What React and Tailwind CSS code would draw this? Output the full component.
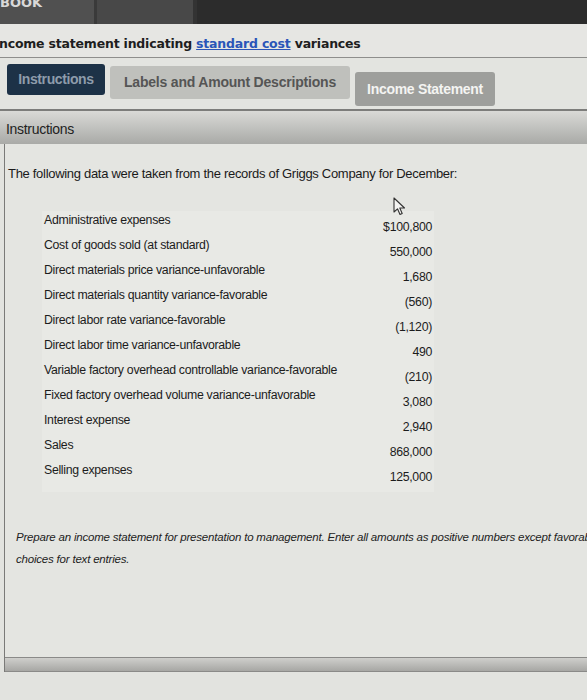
import React from 'react';

const rows = [
   ['Administrative expenses', '$100,800'],
   ['Cost of goods sold (at standard)', '550,000'],
   ['Direct materials price variance-unfavorable', '1,680'],
   ['Direct materials quantity variance-favorable', '(560)'],
   ['Direct labor rate variance-favorable', '(1,120)'],
   ['Direct labor time variance-unfavorable', '490'],
   ['Variable factory overhead controllable variance-favorable', '(210)'],
   ['Fixed factory overhead volume variance-unfavorable', '3,080'],
   ['Interest expense', '2,940'],
   ['Sales', '868,000'],
   ['Selling expenses', '125,000'],
];

function Cursor() {
   return (
      <svg width="14" height="20" viewBox="0 0 14 20" className="absolute left-[393px] top-[197px]">
         <path
            d="M1 1 L1 15 L4.5 11.8 L7 17.5 L9.2 16.5 L6.8 11 L11.5 11 Z"
            fill="#f4f4f2"
            stroke="#333"
            strokeWidth="1.1"
            strokeLinejoin="round"
         />
      </svg>
   );
}

export default function App() {
   return (
      <div className="relative w-[587px] h-[700px] overflow-hidden bg-[#e2e3df] font-['Liberation_Sans',Arial,sans-serif]">
         {/* top dark bar */}
         <div className="flex h-[24px]">
            <div className="w-[97px] bg-[#505050] overflow-hidden border-r-[3px] border-[#3a3a3a]">
               <div className="-mt-[7px] text-[13px] font-bold text-[#d8d8d8] font-['DejaVu_Sans',sans-serif]">
                  BOOK
               </div>
            </div>
            <div className="w-[100px] bg-[#484848] border-r-[4px] border-[#333]" />
            <div className="flex-1 bg-[#2c2c2c]" />
         </div>

         {/* title */}
         <div className="h-[34px] bg-[#e6e6e3] border-b border-[#8e8e8c] flex items-center">
            <h1 className="-ml-[1px] text-[12.5px] font-bold text-[#1e1e1e] font-['DejaVu_Sans',sans-serif] tracking-[-0.2px] pt-[8px]">
               ncome statement indicating{' '}
               <a className="text-[#2a55b8] underline">standard cost</a> variances
            </h1>
         </div>

         {/* tabs */}
         <div className="h-[53px] bg-[#e3e4e0] border-b-2 border-[#7d7d7b] flex items-start px-[7px] gap-[5px] font-bold text-[14px]">
            <div className="mt-[6px] w-[98px] h-[31px] rounded-[3px] bg-[#1d3247] text-[#8e9cab] flex items-center justify-center tracking-[-0.4px]">
               Instructions
            </div>
            <div className="mt-[8px] w-[240px] h-[33px] rounded-[3px] bg-[#bfc0bc] text-[#555] flex items-center justify-center tracking-[-0.2px]">
               Labels and Amount Descriptions
            </div>
            <div className="mt-[14px] w-[140px] h-[34px] rounded-[3px] bg-[#9e9f9c] text-[#f4f4f2] flex items-center justify-center tracking-[-0.3px]">
               Income Statement
            </div>
         </div>

         {/* section header */}
         <div className="h-[33px] bg-gradient-to-b from-[#dadad7] to-[#a9aaa7] flex items-center pl-[6px] pt-[3px] text-[14px] text-[#222] tracking-[-0.3px]">
            Instructions
         </div>

         {/* panel */}
         <div className="ml-[4px] border-l border-[#7a7a78] bg-[#e4e5e1]">
            <p className="pt-[20px] pl-[3px] text-[13px] text-[#1a1a1a] tracking-[-0.3px]">
               The following data were taken from the records of Griggs Company for December:
            </p>

            <div className="mt-[27px] ml-[37px] w-[392px] bg-[#e8e9e5] pb-[6px]">
               {rows.map(([label, value], i) => (
                  <div key={i} className="flex justify-between h-[25px] text-[12.3px] text-[#1c1c1c] tracking-[-0.3px]">
                     <span className="pl-[2px]">{label}</span>
                     <span className="pt-[7px] pr-[2px]">{value}</span>
                  </div>
               ))}
            </div>

            <div className="mt-[34px] pl-[11px] text-[11.5px] italic text-[#222] tracking-[-0.2px] leading-[22px]">
               <p className="whitespace-nowrap">
                  Prepare an income statement for presentation to management. Enter all amounts as positive numbers except favorable variances, which should be indicated with a minus sign.
               </p>
               <p>choices for text entries.</p>
            </div>

            <div className="h-[87px]" />
            <div className="h-[15px] border-t border-b border-[#8a8a88] bg-gradient-to-b from-[#cfcfcc] to-[#a7a7a4]" />
         </div>

         <Cursor />
      </div>
   );
}
